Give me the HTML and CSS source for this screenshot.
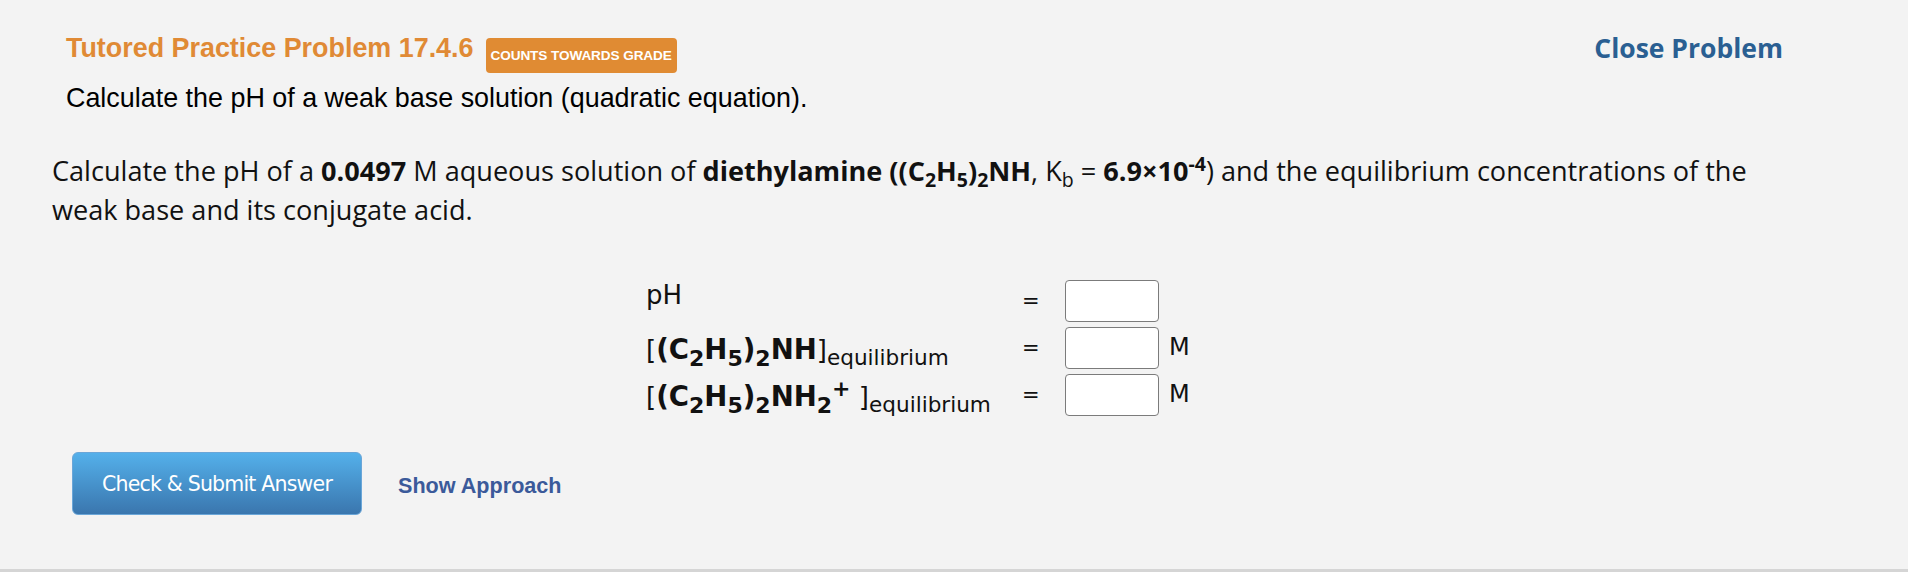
FILE: index.html
```html
<!DOCTYPE html>
<html lang="en">
<head>
<meta charset="utf-8">
<title>Tutored Practice Problem 17.4.6</title>
<link rel="stylesheet" href="styles.css">
</head>
<body>
<div class="page">
  <div class="header">
    <div class="title-group">
      <h1 class="title">Tutored Practice Problem 17.4.6</h1>
      <span class="badge">COUNTS TOWARDS GRADE</span>
    </div>
    <a class="close-link" href="#">Close Problem</a>
  </div>
  <p class="subtitle">Calculate the pH of a weak base solution (quadratic equation).</p>

  <p class="question">Calculate the pH of a <b>0.0497</b> M aqueous solution of <b>diethylamine ((C<sub>2</sub>H<sub>5</sub>)<sub>2</sub>NH</b>, K<sub>b</sub> = <b>6.9×10<sup>-4</sup></b>) and the equilibrium concentrations of the weak base and its conjugate acid.</p>

  <div class="answers">
    <div class="label label-plain">pH</div>
    <div class="eq">=</div>
    <input class="field" type="text">
    <div class="unit"></div>

    <div class="label">[<b>(C<sub>2</sub>H<sub>5</sub>)<sub>2</sub>NH</b>]<sub class="eqsub">equilibrium</sub></div>
    <div class="eq">=</div>
    <input class="field" type="text">
    <div class="unit">M</div>

    <div class="label">[<b>(C<sub>2</sub>H<sub>5</sub>)<sub>2</sub>NH<sub>2</sub><sup>+</sup></b> ]<sub class="eqsub">equilibrium</sub></div>
    <div class="eq">=</div>
    <input class="field" type="text">
    <div class="unit">M</div>
  </div>

  <div class="actions">
    <button class="submit" type="button">Check &amp; Submit Answer</button>
    <a class="approach" href="#">Show Approach</a>
  </div>
</div>
</body>
</html>
```
FILE: styles.css
```css
html, body {
  margin: 0;
  padding: 0;
  background: #ffffff;
}

.page {
  background: #f3f3f3;
  border-bottom: 3px solid #d5d5d5;
  height: 572px;
  box-sizing: border-box;
  padding: 33px 125px 0 52px;
}

.header {
  display: flex;
  justify-content: space-between;
  align-items: flex-start;
  padding-left: 14px;
}

.title-group {
  display: flex;
  align-items: flex-start;
}

.title {
  margin: 0;
  font-family: "Liberation Sans", Arial, sans-serif;
  font-weight: bold;
  font-size: 26.9px;
  line-height: 30px;
  color: #e08a35;
}

.badge {
  margin-top: 5px;
  margin-left: 12px;
  height: 35px;
  line-height: 36px;
  padding: 0 5px 0 5px;
  border-radius: 4px;
  background: #e08b33;
  color: #ffffff;
  font-family: "Liberation Sans", Arial, sans-serif;
  font-weight: bold;
  font-size: 13.6px;
  letter-spacing: -0.1px;
}

.close-link {
  font-family: "Open Sans", sans-serif;
  font-weight: bold;
  font-size: 26.5px;
  line-height: 30px;
  color: #2a5f92;
  text-decoration: none;
}

.subtitle {
  margin: 10px 0 0 14px;
  font-family: "Liberation Sans", Arial, sans-serif;
  font-size: 26.9px;
  line-height: 30px;
  color: #000;
}

.question {
  margin: 38px 0 0 0;
  font-family: "Open Sans", sans-serif;
  font-size: 27.1px;
  line-height: 39px;
  color: #111;
}

.question b {
  font-weight: bold;
}

.question sub, .question sup {
  font-size: 0.72em;
  line-height: 0;
}

.answers {
  margin: 51px 0 0 594px;
  display: grid;
  grid-template-columns: 376px 43px 94px auto;
  grid-auto-rows: 42px;
  row-gap: 5px;
  align-items: center;
  font-family: "DejaVu Sans", Verdana, sans-serif;
  font-size: 26px;
  color: #111;
}

.label {
  line-height: 42px;
  padding-top: 2px;
  white-space: nowrap;
}

.label-plain {
  padding-top: 0;
  padding-bottom: 12px;
}

.label b {
  font-weight: bold;
  font-size: 1.06em;
}

.label sub, .label sup {
  font-size: 0.8em;
  line-height: 0;
}

.label .eqsub {
  font-weight: normal;
  font-size: 0.83em;
}

.eq {
  font-size: 21px;
  padding-top: 0;
}

.field {
  box-sizing: border-box;
  width: 94px;
  height: 42px;
  margin: 0;
  border: 1px solid #7b7b7b;
  border-radius: 4px;
  background: #ffffff;
}

.unit {
  padding-left: 10px;
  padding-bottom: 2px;
  font-size: 24px;
}

.actions {
  margin-top: 36px;
  padding-left: 20px;
  display: flex;
  align-items: center;
  gap: 36px;
}

.submit {
  width: 290px;
  height: 63px;
  border: 1px solid #6aa6d8;
  border-radius: 6px;
  background: linear-gradient(#54b0ea, #3a76ae);
  color: #ffffff;
  font-family: "DejaVu Sans", Tahoma, sans-serif;
  font-size: 20.5px;
  letter-spacing: -0.8px;
  padding: 0;
}

.approach {
  font-family: "Liberation Sans", Arial, sans-serif;
  font-weight: bold;
  font-size: 21.6px;
  color: #3b5a9a;
  text-decoration: none;
  padding-top: 4px;
}
```
